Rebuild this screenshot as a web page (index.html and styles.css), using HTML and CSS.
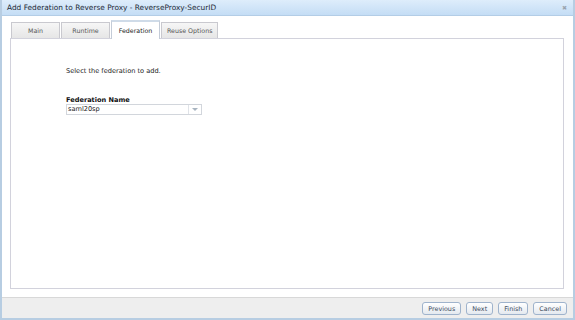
FILE: index.html
```html
<!DOCTYPE html>
<html lang="en">
<head>
  <meta charset="UTF-8">
  <title>Add Federation to Reverse Proxy</title>
  <link rel="stylesheet" href="styles.css">
</head>
<body>
  <div class="dialog">
    <div class="titlebar">
      <span class="title">Add Federation to Reverse Proxy - ReverseProxy-SecurID</span>
      <span class="close">&#x2716;</span>
    </div>

    <div class="dialog-body">
      <!-- Tabs -->
      <div class="tabs">
        <div class="tab">Main</div>
        <div class="tab">Runtime</div>
        <div class="tab active">Federation</div>
        <div class="tab">Reuse Options</div>
      </div>

      <div class="panel">
        <p class="hint">Select the federation to add.</p>
        <label class="field-label">Federation Name</label>
        <div class="select">
          <span class="select-value">saml20sp</span>
          <span class="select-arrow"></span>
        </div>
      </div>
    </div>

    <div class="footer">
      <button class="btn">Previous</button>
      <button class="btn">Next</button>
      <button class="btn">Finish</button>
      <button class="btn">Cancel</button>
    </div>
  </div>
</body>
</html>
```

FILE: styles.css
```css
* {
  box-sizing: border-box;
}

body {
  margin: 0;
  font-family: 'DejaVu Sans', Verdana, sans-serif;
  color: #222;
}

.dialog {
  width: 575px;
  height: 320px;
  border: 2px solid #b7cde2;
  border-top: none;
  display: flex;
  flex-direction: column;
  background: #fff;
}

.titlebar {
  height: 16px;
  display: flex;
  align-items: center;
  justify-content: space-between;
  padding: 0 6px 0 5px;
  background: linear-gradient(to bottom, #deedfb, #c4ddf5);
  border-bottom: 1px solid #b3cde6;
}

.title {
  font-size: 7.4px;
  color: #1e2a36;
}

.close {
  font-size: 6px;
  color: #9aa4ae;
}

.dialog-body {
  flex: 1;
  padding: 3px 9px 8px 8px;
  display: flex;
  flex-direction: column;
}

.tabs {
  display: flex;
  align-items: flex-end;
  height: 19px;
  padding-left: 1px;
  gap: 1px;
}

.tab {
  height: 16px;
  padding: 0 5px;
  min-width: 49px;
  display: flex;
  align-items: center;
  justify-content: center;
  font-size: 6.3px;
  color: #555;
  border: 1px solid #c9c9cf;
  border-bottom: none;
  background: linear-gradient(to bottom, #f6f6f6, #e6e6e6);
}

.tab.active {
  height: 19px;
  color: #222;
  background: #fff;
  border-color: #c4ccd8;
  border-top: 2px solid #cfdbe8;
  margin-bottom: -1px;
  position: relative;
}

.panel {
  flex: 1;
  border: 1px solid #d2d2dc;
  padding: 28px 55px;
}

.hint {
  margin: 0 0 21px 0;
  font-size: 6.6px;
  color: #222;
}

.field-label {
  display: block;
  font-size: 6.6px;
  font-weight: bold;
  color: #111;
}

.select {
  width: 136px;
  height: 11px;
  border: 1px solid #d2d6dc;
  display: flex;
}

.select-value {
  flex: 1;
  font-size: 6.6px;
  padding-left: 1px;
  line-height: 9px;
}

.select-arrow {
  width: 13px;
  border-left: 1px solid #e0e3e8;
  display: flex;
  align-items: center;
  justify-content: center;
}

.select-arrow::after {
  content: "";
  border-left: 3px solid transparent;
  border-right: 3px solid transparent;
  border-top: 3px solid #a8b4c0;
}

.footer {
  height: 21px;
  border-top: 1px solid #d8d8d8;
  background: #eeeeee;
  display: flex;
  justify-content: flex-end;
  align-items: center;
  gap: 5px;
  padding: 1px 6px 0 0;
}

.btn {
  height: 13px;
  padding: 0 5px;
  font-family: inherit;
  font-size: 6.4px;
  color: #3c4a5c;
  border: 1px solid #9fb3cc;
  border-radius: 3px;
  background: linear-gradient(to bottom, #ffffff, #e4e9ef);
  cursor: pointer;
}
```
